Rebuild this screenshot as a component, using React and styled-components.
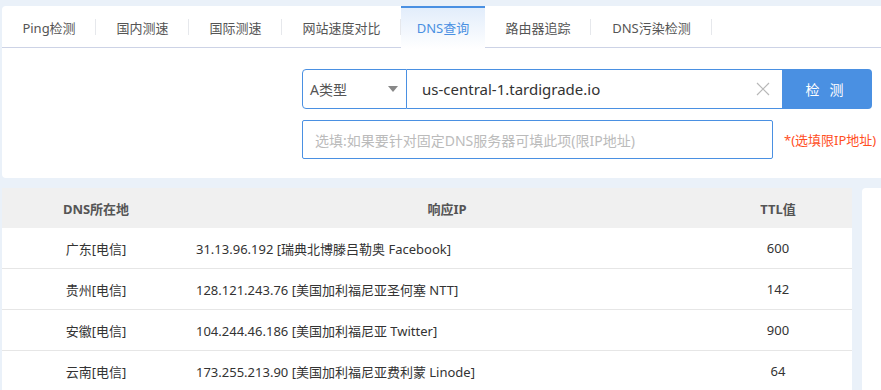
import React from "react";
import styled, { createGlobalStyle, css } from "styled-components";

const GlobalStyle = createGlobalStyle`
  html, body { margin: 0; padding: 0; }
  body {
    background: #eaf1f9;
    font-family: "Noto Sans", "Noto Sans CJK SC", sans-serif;
    color: #333;
  }
`;

const Page = styled.div`
  padding: 6px 0 0 2px;
  overflow: hidden;
  height: 384px;
`;

const Card = styled.div`
  background: #fff;
  border-radius: 4px 0 0 4px;
  height: 172px;
`;

const TabBar = styled.div`
  display: flex;
  height: 42px;
  border-bottom: 1px solid #cdd3e6;
  box-sizing: border-box;
`;

const Tab = styled.div`
  position: relative;
  display: flex;
  align-items: center;
  justify-content: center;
  width: ${(p) => p.$w}px;
  height: 42px;
  box-sizing: border-box;
  font-size: 13px;
  color: #555;
  cursor: pointer;
  ${(p) =>
    p.$active
      ? css`
          color: #4a90e2;
          border-top: 2px solid #4a90e2;
          background: linear-gradient(#e2edfb, #ffffff);
          height: 43px;
          margin-bottom: -1px;
          padding-bottom: 2px;
        `
      : css`
          &::after {
            content: "";
            position: absolute;
            right: 0;
            top: 13px;
            height: 16px;
            width: 1px;
            background: #e6e8ec;
          }
        `}
`;

const Form = styled.div`
  display: flex;
  flex-direction: column;
  gap: 11px;
  padding: 21px 0 0 300px;
`;

const Row = styled.div`
  display: flex;
  align-items: center;
`;

const Select = styled.div`
  width: 105px;
  height: 40px;
  box-sizing: border-box;
  border: 1px solid #4a90e2;
  border-radius: 4px 0 0 4px;
  display: flex;
  align-items: center;
  justify-content: space-between;
  padding: 0 8px 0 7px;
  font-size: 14px;
  color: #555;
`;

const Caret = styled.span`
  width: 0;
  height: 0;
  border-left: 5px solid transparent;
  border-right: 5px solid transparent;
  border-top: 6px solid #888;
`;

const MainInput = styled.div`
  width: 376px;
  height: 40px;
  box-sizing: border-box;
  border: 1px solid #4a90e2;
  border-left: none;
  display: flex;
  align-items: center;
  justify-content: space-between;
  padding: 0 12px 0 15px;
  font-size: 15px;
  color: #333;
`;

const ClearIcon = styled.svg`
  width: 14px;
  height: 14px;
`;

const Button = styled.button`
  width: 89px;
  height: 40px;
  border: none;
  border-radius: 0 4px 4px 0;
  background: #4a90e2;
  color: #fff;
  font-family: inherit;
  font-size: 14px;
  letter-spacing: 10px;
  padding-left: 10px;
`;

const DnsInput = styled.div`
  width: 471px;
  height: 39px;
  box-sizing: border-box;
  border: 1px solid #4a90e2;
  border-radius: 2px;
  display: flex;
  align-items: center;
  padding-left: 12px;
  font-size: 14px;
  color: #bbb;
`;

const Note = styled.span`
  margin-left: 11px;
  font-size: 13px;
  color: #ff4f1f;
`;

const Lower = styled.div`
  display: flex;
  gap: 10px;
  margin-top: 10px;
`;

const Table = styled.div`
  width: 850px;
  background: #fff;
  flex-shrink: 0;
`;

const Grid = styled.div`
  display: grid;
  grid-template-columns: 188px 1fr 148px;
  align-items: center;
  height: ${(p) => (p.$head ? 40 : 40)}px;
  font-size: 13px;
  ${(p) =>
    p.$head
      ? css`
          background: #f0f0f0;
          font-weight: bold;
          color: #555;
        `
      : css`
          color: #333;
          border-bottom: 1px solid #e6e6e6;
        `}
`;

const Cell = styled.div`
  text-align: ${(p) => p.$align || "center"};
  padding-left: ${(p) => p.$pl || 0}px;
  white-space: nowrap;
`;

const SidePanel = styled.div`
  flex: 1;
  background: #fff;
  border-radius: 4px 0 0 0;
  height: 210px;
`;

const tabs = [
  { label: "Ping检测", w: 94 },
  { label: "国内测速", w: 93 },
  { label: "国际测速", w: 93 },
  { label: "网站速度对比", w: 119 },
  { label: "DNS查询", w: 84, active: true },
  { label: "路由器追踪", w: 106 },
  { label: "DNS污染检测", w: 121 },
];

const rows = [
  ["广东[电信]", "31.13.96.192 [瑞典北博滕吕勒奥 Facebook]", "600"],
  ["贵州[电信]", "128.121.243.76 [美国加利福尼亚圣何塞 NTT]", "142"],
  ["安徽[电信]", "104.244.46.186 [美国加利福尼亚 Twitter]", "900"],
  ["云南[电信]", "173.255.213.90 [美国加利福尼亚费利蒙 Linode]", "64"],
];

export default function App() {
  return (
    <>
      <GlobalStyle />
      <Page>
        <Card>
          <TabBar>
            {tabs.map((t) => (
              <Tab key={t.label} $w={t.w} $active={t.active}>
                {t.label}
              </Tab>
            ))}
          </TabBar>
          <Form>
            <Row>
              <Select>
                A类型
                <Caret />
              </Select>
              <MainInput>
                us-central-1.tardigrade.io
                <ClearIcon viewBox="0 0 14 14">
                  <path d="M1 1L13 13M13 1L1 13" stroke="#b8b8b8" strokeWidth="1.2" fill="none" />
                </ClearIcon>
              </MainInput>
              <Button>检测</Button>
            </Row>
            <Row>
              <DnsInput>选填:如果要针对固定DNS服务器可填此项(限IP地址)</DnsInput>
              <Note>*(选填限IP地址)</Note>
            </Row>
          </Form>
        </Card>
        <Lower>
          <Table>
            <Grid $head>
              <Cell>DNS所在地</Cell>
              <Cell>响应IP</Cell>
              <Cell>TTL值</Cell>
            </Grid>
            {rows.map((r) => (
              <Grid key={r[0]}>
                <Cell>{r[0]}</Cell>
                <Cell $align="left" $pl={6}>{r[1]}</Cell>
                <Cell>{r[2]}</Cell>
              </Grid>
            ))}
          </Table>
          <SidePanel />
        </Lower>
      </Page>
    </>
  );
}
